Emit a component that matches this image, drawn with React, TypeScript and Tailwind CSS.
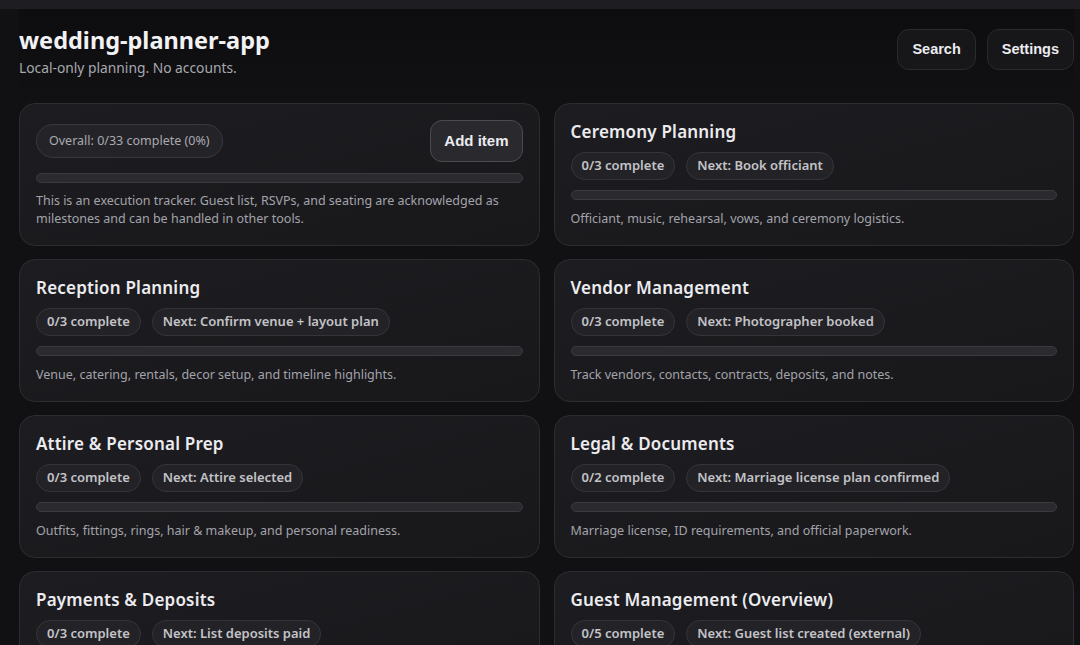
import React from 'react';

interface Section {
  title: string;
  done: number;
  total: number;
  next: string;
  description: string;
}

const sections: Section[] = [
  { title: 'Ceremony Planning', done: 0, total: 3, next: 'Book officiant', description: 'Officiant, music, rehearsal, vows, and ceremony logistics.' },
  { title: 'Reception Planning', done: 0, total: 3, next: 'Confirm venue + layout plan', description: 'Venue, catering, rentals, decor setup, and timeline highlights.' },
  { title: 'Vendor Management', done: 0, total: 3, next: 'Photographer booked', description: 'Track vendors, contacts, contracts, deposits, and notes.' },
  { title: 'Attire & Personal Prep', done: 0, total: 3, next: 'Attire selected', description: 'Outfits, fittings, rings, hair & makeup, and personal readiness.' },
  { title: 'Legal & Documents', done: 0, total: 2, next: 'Marriage license plan confirmed', description: 'Marriage license, ID requirements, and official paperwork.' },
  { title: 'Payments & Deposits', done: 0, total: 3, next: 'List deposits paid', description: 'Deposits, balances, due dates, and payment tracking.' },
  { title: 'Guest Management (Overview)', done: 0, total: 5, next: 'Guest list created (external)', description: 'Guest list, RSVPs, and seating handled in other tools.' },
];

const font = { fontFamily: '"Noto Sans", "Open Sans", sans-serif' };
const btnFont = { fontFamily: '"Liberation Sans", Arial, sans-serif' };

function ProgressBar({ value }: { value: number }) {
  return (
    <div className="h-[10px] w-full overflow-hidden rounded-full border border-[#3a3a3f] bg-[#2a2a2f]">
      <div className="h-full rounded-full bg-[#8b8b93]" style={{ width: `${value}%` }} />
    </div>
  );
}

function Pill({ children }: { children: React.ReactNode }) {
  return (
    <span className="inline-flex h-[28px] items-center rounded-full border border-[#34343a] bg-[#232327] px-[10px] text-[13px] font-semibold text-[#c3c3c8]">
      {children}
    </span>
  );
}

function SectionCard({ section }: { section: Section }) {
  const pct = section.total ? (section.done / section.total) * 100 : 0;
  return (
    <div className="rounded-[16px] border border-[#2c2c31] bg-gradient-to-br from-[#1d1d21] to-[#18181b] px-4 pt-4 pb-[17px]">
      <h2 className="text-[17px] leading-[24px] font-semibold tracking-[0.2px] text-[#ececf0]">{section.title}</h2>
      <div className="mt-[8px] flex gap-[11px]">
        <Pill>{section.done}/{section.total} complete</Pill>
        <Pill>Next: {section.next}</Pill>
      </div>
      <div className="mt-[10px]">
        <ProgressBar value={pct} />
      </div>
      <p className="mt-[10px] text-[12.5px] leading-[18px] text-[#a3a3aa]">{section.description}</p>
    </div>
  );
}

export default function App() {
  return (
    <div className="min-h-[645px] bg-[#111114] pt-[9px] pr-[6px] pb-6 pl-[19px]" style={font}>
      <div className="-mt-[9px] -mr-[6px] -ml-[19px] h-[9px] bg-[#1e1e22]" />
      <header className="flex items-start justify-between bg-gradient-to-b from-[#0d0d10] to-[#111114] pt-[17px] pb-[26px]">
        <div>
          <h1 className="text-[23.5px] leading-[28px] font-bold text-[#f2f2f4]">wedding-planner-app</h1>
          <p className="mt-[5px] text-[13.8px] leading-[18px] text-[#a8a8ae]">Local-only planning. No accounts.</p>
        </div>
        <div className="flex gap-[11px] pt-[3px]" style={btnFont}>
          <button className="h-[41px] rounded-[12px] border border-[#2a2a2f] bg-[#17171a] px-[14px] text-[14.5px] font-bold text-[#ececf0]">Search</button>
          <button className="h-[41px] rounded-[12px] border border-[#2a2a2f] bg-[#17171a] px-[14px] text-[14.5px] font-bold text-[#ececf0]">Settings</button>
        </div>
      </header>

      <div className="grid grid-cols-2 gap-x-[14px] gap-y-[13px]">
        <div className="rounded-[16px] border border-[#2c2c31] bg-gradient-to-br from-[#1d1d21] to-[#18181b] px-4 pt-4 pb-[16px]">
          <div className="flex items-center justify-between">
            <span className="inline-flex h-[34px] items-center rounded-full border border-[#38383e] bg-[#242428] px-3 text-[12.5px] text-[#a9a9b0]">
              Overall: 0/33 complete (0%)
            </span>
            <button
              className="h-[42px] rounded-[12px] border border-[#4a4a50] bg-[#2a2a2e] px-[13px] text-[15px] font-bold text-[#ececf0]"
              style={btnFont}
            >
              Add item
            </button>
          </div>
          <div className="mt-[11px]">
            <ProgressBar value={0} />
          </div>
          <p className="mt-[9px] text-[12.5px] leading-[18px] text-[#a3a3aa]">
            This is an execution tracker. Guest list, RSVPs, and seating are acknowledged as milestones and can be handled in other tools.
          </p>
        </div>
        {sections.map((s) => (
          <SectionCard key={s.title} section={s} />
        ))}
      </div>
    </div>
  );
}
